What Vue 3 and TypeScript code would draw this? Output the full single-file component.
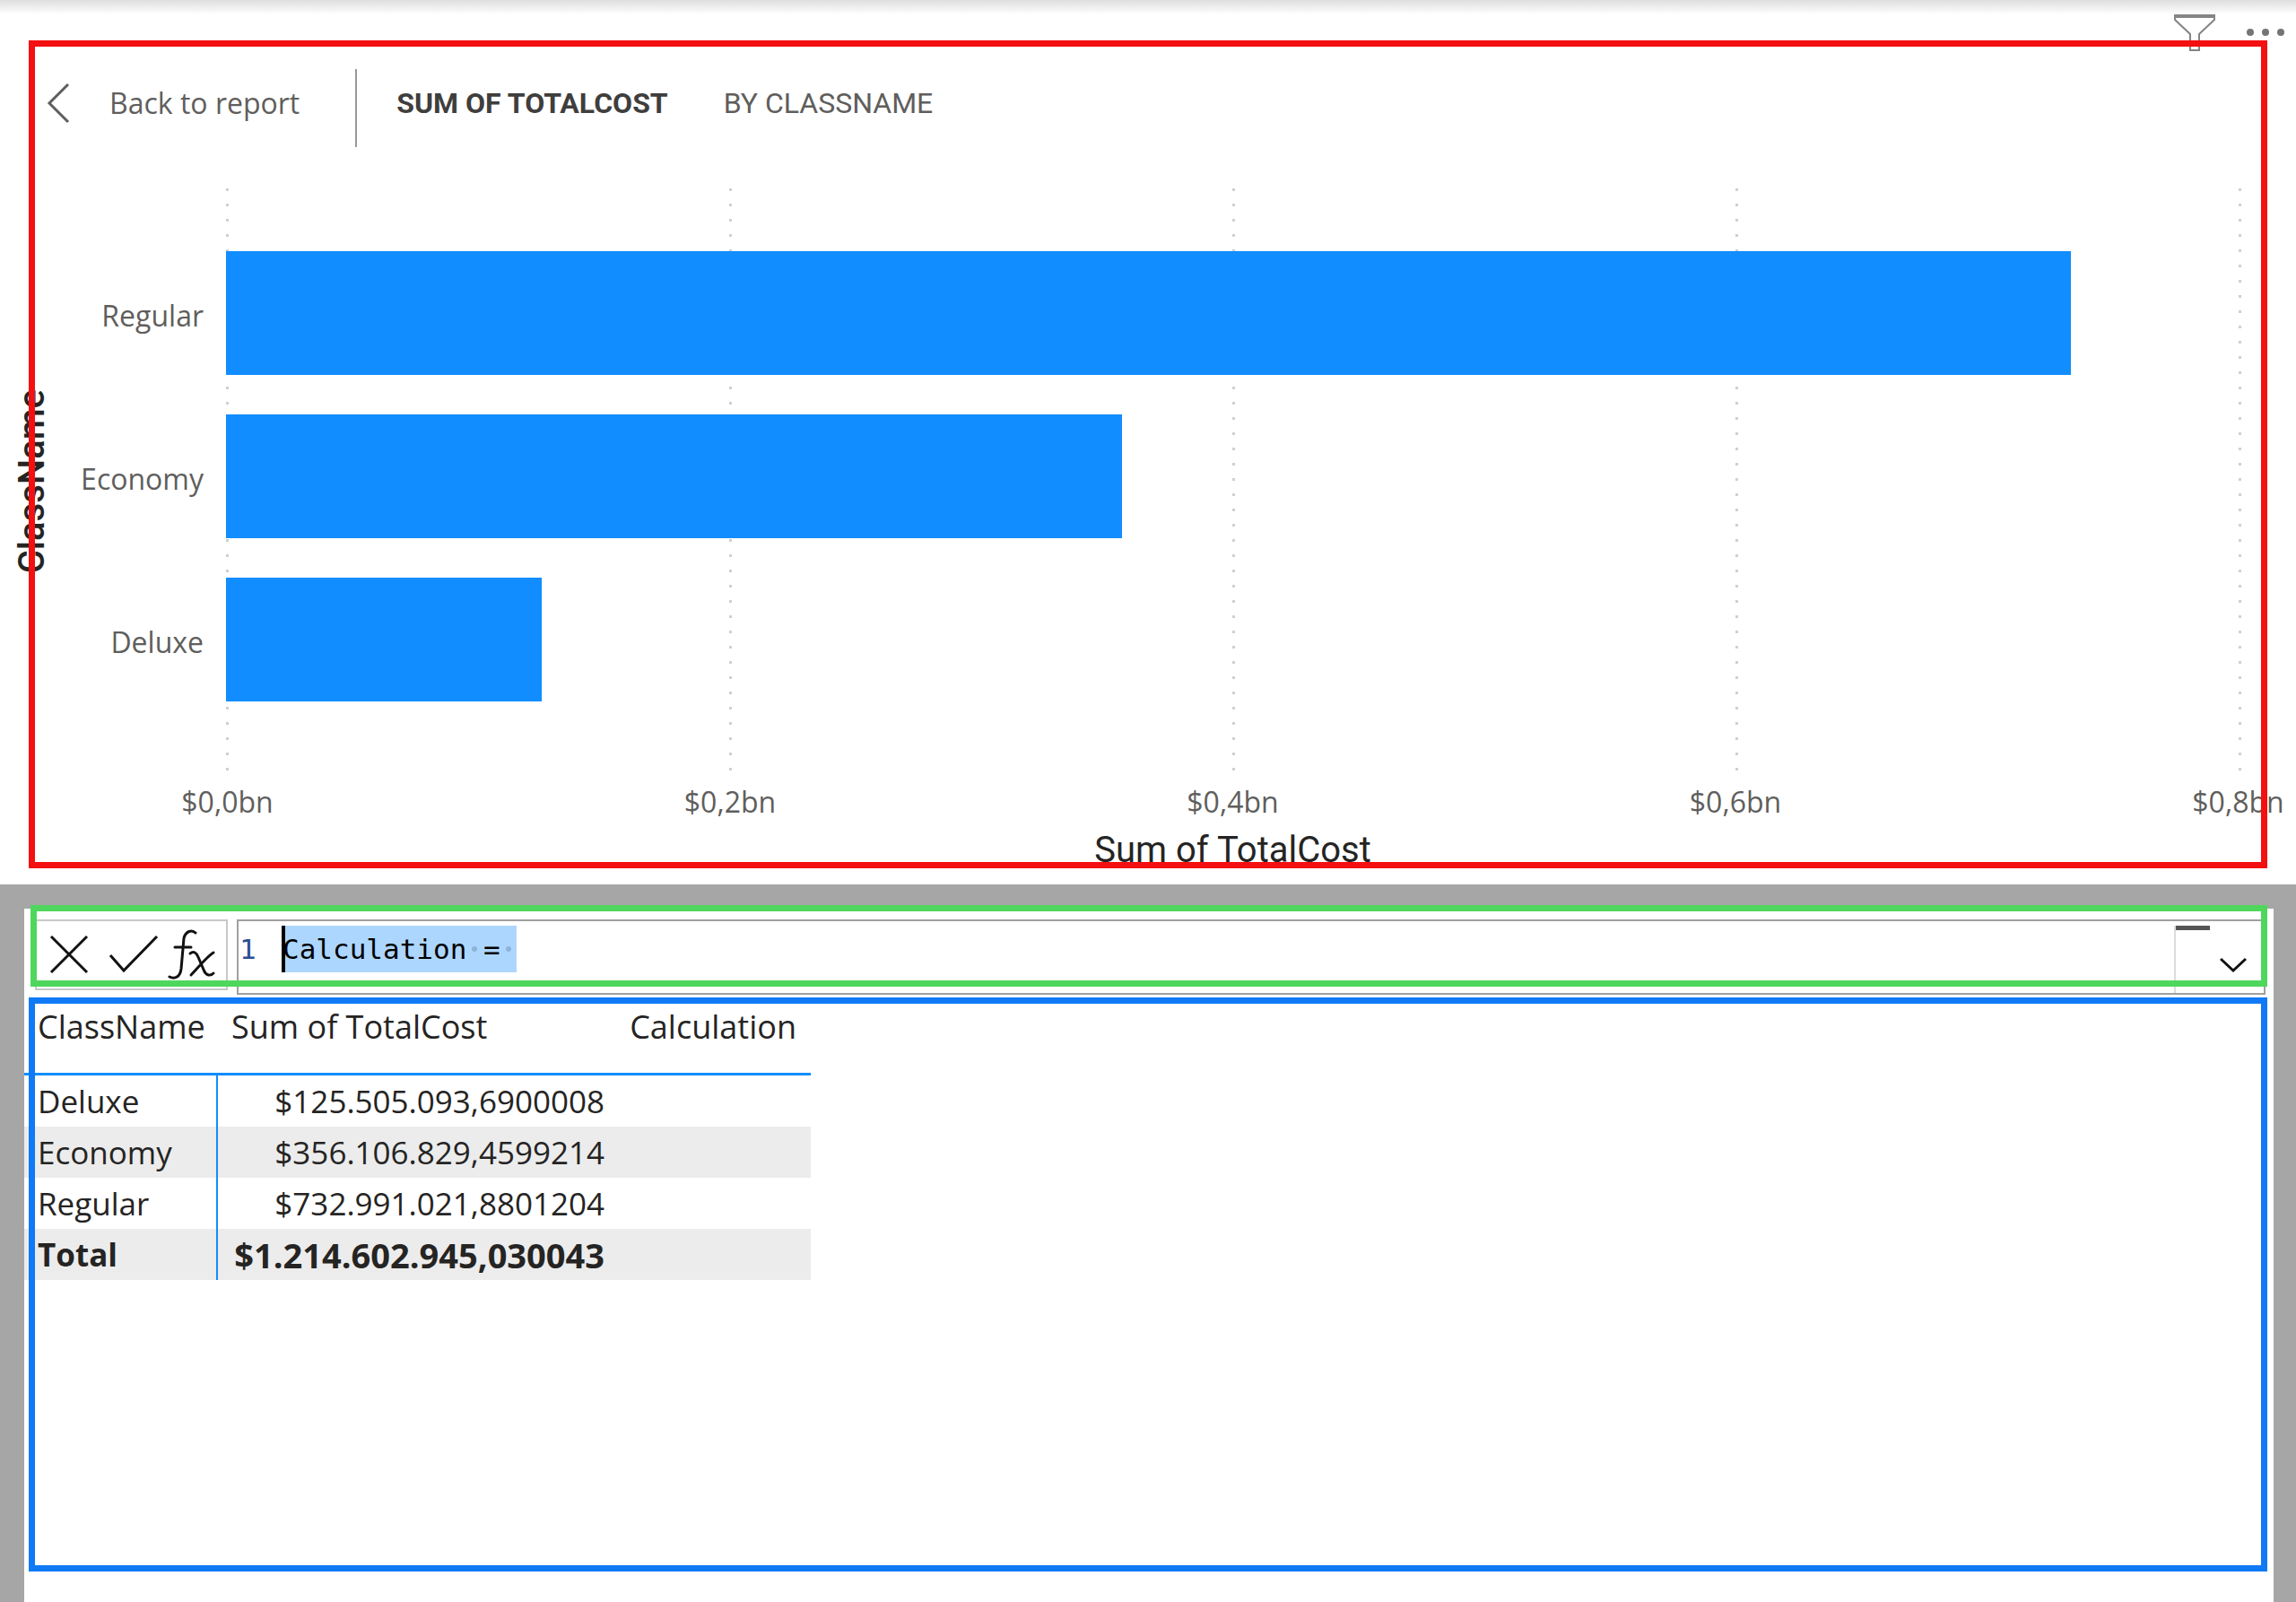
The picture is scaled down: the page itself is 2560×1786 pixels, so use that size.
<script setup lang="ts">
import { ref } from 'vue'

interface Bar {
  name: string
  value: number
}

interface MatrixRow {
  name: string
  cost: string
  calculation: string
}

const axisMax = 800
const bars: Bar[] = [
  { name: 'Regular', value: 732.99 },
  { name: 'Economy', value: 356.11 },
  { name: 'Deluxe', value: 125.51 },
]
const ticks: string[] = ['$0,0bn', '$0,2bn', '$0,4bn', '$0,6bn', '$0,8bn']

const rows: MatrixRow[] = [
  { name: 'Deluxe', cost: '$125.505.093,6900008', calculation: '' },
  { name: 'Economy', cost: '$356.106.829,4599214', calculation: '' },
  { name: 'Regular', cost: '$732.991.021,8801204', calculation: '' },
]

const formula = ref('Calculation = ')

const barWidth = (bar: Bar): string => `${(bar.value / axisMax) * 100}%`
</script>

<template>
  <main class="page">
    <section class="visual" aria-label="Sum of TotalCost by ClassName">
      <div class="visual-tools">
        <button type="button" class="icon-button" aria-label="Filters">
          <svg width="48" height="44" viewBox="0 0 48 44" fill="none" stroke="#858585" stroke-width="2">
            <path d="M2 3H46V8L29 24V42H19V24L2 8Z" />
            <path d="M2 5H46" />
          </svg>
        </button>
        <button type="button" class="icon-button" aria-label="More options">
          <svg width="44" height="44" viewBox="0 0 44 44" fill="#757575">
            <circle cx="5" cy="22" r="4" />
            <circle cx="22" cy="22" r="4" />
            <circle cx="39" cy="22" r="4" />
          </svg>
        </button>
      </div>

      <header class="visual-header">
        <button type="button" class="back">
          <svg width="26" height="46" viewBox="0 0 26 46" fill="none" stroke="#605e5c" stroke-width="3">
            <path d="M24 2L3 23L24 44" />
          </svg>
          <span>Back to report</span>
        </button>
        <span class="divider"></span>
        <h1 class="measure">SUM OF TOTALCOST</h1>
        <h2 class="group">BY CLASSNAME</h2>
      </header>

      <div class="chart">
        <div class="y-title"><span>ClassName</span></div>
        <div class="categories">
          <span v-for="bar in bars" :key="bar.name" class="category">{{ bar.name }}</span>
        </div>
        <div class="plot">
          <div class="gridlines">
            <span v-for="tick in ticks" :key="tick" class="gridline"></span>
          </div>
          <div class="bars">
            <div v-for="bar in bars" :key="bar.name" class="bar" :style="{ width: barWidth(bar) }"></div>
          </div>
        </div>
        <div class="x-axis">
          <div class="ticks">
            <span v-for="tick in ticks" :key="tick" class="tick">{{ tick }}</span>
          </div>
          <div class="x-title">Sum of TotalCost</div>
        </div>
      </div>
      <div class="frame frame-red"></div>
    </section>

    <section class="workspace">
      <div class="panel">
        <div class="formula-bar">
          <div class="actions">
            <button type="button" class="icon-button" aria-label="Cancel">
              <svg width="44" height="56" viewBox="0 0 44 56" fill="none" stroke="#111" stroke-width="3">
                <path d="M2 8L42 48M42 8L2 48" />
              </svg>
            </button>
            <button type="button" class="icon-button" aria-label="Commit">
              <svg width="56" height="56" viewBox="0 0 56 56" fill="none" stroke="#111" stroke-width="3">
                <path d="M2 29L17 46L54 8" />
              </svg>
            </button>
            <button type="button" class="icon-button functions" aria-label="Functions">
              <svg width="54" height="56" viewBox="0 0 54 56" fill="none" stroke="#111" stroke-width="3" stroke-linecap="round">
                <path d="M31 4C27 0 20 2 18 10L15 44C14 53 8 56 2 53" />
                <path d="M8 20H26" />
                <path d="M25 27C29 24 32 26 34 31L40 45C42 51 47 53 51 49M51 26C44 30 33 44 26 51" />
              </svg>
            </button>
          </div>
          <div class="editor">
            <label class="line-number" for="formula">1</label>
            <div class="line">
              <span class="selection"></span>
              <span class="space-mark first"></span>
              <span class="space-mark second"></span>
              <input id="formula" v-model="formula" class="formula-input" type="text" spellcheck="false" />
              <span class="caret"></span>
            </div>
            <div class="editor-side">
              <span class="scroll-mark"></span>
              <button type="button" class="icon-button expand" aria-label="Expand formula bar">
                <svg width="30" height="18" viewBox="0 0 30 18" fill="none" stroke="#111" stroke-width="3">
                  <path d="M1 2L15 15L29 2" />
                </svg>
              </button>
            </div>
          </div>
          <div class="frame frame-green"></div>
        </div>

        <div class="matrix">
          <table>
            <colgroup>
              <col class="col-name" />
              <col class="col-cost" />
              <col class="col-calc" />
            </colgroup>
            <thead>
              <tr>
                <th scope="col">ClassName</th>
                <th scope="col">Sum of TotalCost</th>
                <th scope="col">Calculation</th>
              </tr>
            </thead>
            <tbody>
              <tr v-for="row in rows" :key="row.name">
                <th scope="row">{{ row.name }}</th>
                <td>{{ row.cost }}</td>
                <td>{{ row.calculation }}</td>
              </tr>
              <tr class="total">
                <th scope="row">Total</th>
                <td>$1.214.602.945,030043</td>
                <td></td>
              </tr>
            </tbody>
          </table>
          <div class="frame frame-blue"></div>
        </div>
      </div>
    </section>
  </main>
</template>

<style>
body {
  margin: 0;
  background: #fff;
}
</style>

<style scoped>
.page {
  display: flex;
  flex-direction: column;
  min-height: 100vh;
  overflow: hidden;
  font-family: 'Open Sans', 'Noto Sans', sans-serif;
  font-size: 32px;
  line-height: 44px;
  color: #605e5c;
}

.page *,
.page {
  box-sizing: border-box;
}

button {
  margin: 0;
  padding: 0;
  border: 0;
  background: none;
  font: inherit;
  color: inherit;
}

.icon-button {
  display: flex;
}

.frame {
  position: absolute;
  border: 7px solid;
  pointer-events: none;
}

.frame-red {
  inset: 45px 32px 18px;
  border-color: #f41010;
}

.frame-green {
  inset: -4px 7px 9px;
  border-color: #4fd75d;
}

.frame-blue {
  inset: 3px 7px 34px 5px;
  border-color: #1079f6;
}

/* Chart */
.visual {
  position: relative;
  padding-bottom: 15px;
  background: linear-gradient(#dedede, #fff 16px);
}

.visual-tools {
  display: flex;
  justify-content: flex-end;
  gap: 33px;
  height: 77px;
  padding: 14px 12px 0 0;
}

.visual-header {
  display: flex;
  align-items: flex-start;
  padding-left: 52px;
  line-height: 76px;
  white-space: nowrap;
}

.back {
  display: flex;
  align-items: center;
  gap: 44px;
  height: 76px;
}

.divider {
  width: 2px;
  height: 87px;
  margin: 0 44px 0 62px;
  background: #999;
}

.measure,
.group {
  margin: 0;
  font-family: Roboto, sans-serif;
  font-size: 32px;
}

.measure {
  margin-right: 62px;
  font-weight: 700;
  color: #3f3e3d;
}

.group {
  font-weight: 400;
}

.chart {
  display: grid;
  grid-template-columns: 48px 167px 1fr;
  margin-top: 46px;
  padding: 0 63px 0 12px;
}

.y-title {
  display: flex;
  align-items: center;
  justify-content: center;
  font-family: Roboto, sans-serif;
  font-size: 40px;
  font-weight: 500;
  line-height: 48px;
  color: #252423;
}

.y-title span {
  writing-mode: vertical-rl;
  transform: rotate(180deg);
}

.categories {
  display: flex;
  flex-direction: column;
  gap: 44px;
  padding-top: 73px;
  text-align: right;
}

.category {
  height: 138px;
  line-height: 138px;
}

.plot {
  position: relative;
  margin-left: 25px;
  padding: 70px 0 82px;
}

.gridlines {
  position: absolute;
  inset: 0 -2px 0 0;
  display: flex;
  justify-content: space-between;
}

.gridline {
  width: 3px;
  background: repeating-linear-gradient(#d0d0d0 0 3px, transparent 3px 17px);
}

.bars {
  position: relative;
  display: flex;
  flex-direction: column;
  gap: 44px;
}

.bar {
  height: 138px;
  background: #118dff;
}

.x-axis {
  grid-column: 3;
  margin-left: 25px;
  padding-top: 8px;
}

.ticks {
  display: flex;
  justify-content: space-between;
}

.tick {
  display: flex;
  justify-content: center;
  width: 3px;
  white-space: nowrap;
}

.x-title {
  margin-top: 9px;
  font-family: Roboto, sans-serif;
  font-size: 40px;
  font-weight: 400;
  line-height: 46px;
  text-align: center;
  color: #252423;
}

/* Formula bar */
.workspace {
  display: flex;
  flex: 1;
  padding: 27px 25px 0 27px;
  background: #a6a6a6;
}

.panel {
  display: flex;
  flex: 1;
  flex-direction: column;
  background: #fff;
}

.formula-bar {
  position: relative;
  display: flex;
  align-items: flex-start;
  gap: 10px;
  padding: 12px 9px 0 12px;
}

.actions {
  display: flex;
  align-items: flex-start;
  gap: 22px;
  height: 79px;
  padding: 9px 11px 0 14px;
  border: 2px solid #c8c8c8;
}

.functions {
  margin-left: -12px;
}

.editor {
  display: flex;
  flex: 1;
  height: 84px;
  border: 2px solid #a0a0a0;
  font-family: 'DejaVu Sans Mono', monospace;
  font-size: 31px;
  line-height: 52px;
}

.line-number {
  width: 49px;
  padding: 5px 0 0 1px;
  color: #2b4f94;
}

.line {
  position: relative;
  flex: 1;
  height: 52px;
  margin-top: 5px;
}

.selection {
  position: absolute;
  inset: 0 auto 0 0;
  width: 14ch;
  background: #add6ff;
}

.space-mark {
  position: absolute;
  top: 23px;
  width: 6px;
  height: 6px;
  border-radius: 3px;
  background: #8eb2d8;
}

.space-mark.first {
  left: 11ch;
  margin-left: 6px;
}

.space-mark.second {
  left: 13ch;
  margin-left: 6px;
}

.formula-input {
  position: relative;
  display: block;
  width: 100%;
  height: 52px;
  padding: 0;
  border: 0;
  outline: 0;
  background: none;
  font: inherit;
  color: #000;
}

.caret {
  position: absolute;
  inset: 0 auto 0 -1px;
  width: 4px;
  background: #000;
}

.editor-side {
  display: flex;
  align-items: flex-start;
  width: 100px;
  margin-top: 5px;
  border-left: 2px solid #dcdcdc;
}

.scroll-mark {
  width: 38px;
  height: 5px;
  background: #555;
}

.expand {
  margin: 35px 0 0 11px;
}

/* Matrix */
.matrix {
  position: relative;
  flex: 1;
  min-height: 360px;
}

table {
  width: 877px;
  table-layout: fixed;
  border-spacing: 0;
  font-size: 35px;
  line-height: 48px;
  white-space: nowrap;
  color: #252423;
}

.col-name {
  width: 216px;
}

.col-cost {
  width: 447px;
}

.col-calc {
  width: 214px;
}

th {
  padding: 0 0 0 15px;
  font-weight: 400;
  text-align: left;
}

thead th {
  height: 90px;
  padding-top: 12px;
  border-bottom: 3px solid #118dff;
  font-size: 36px;
  vertical-align: top;
}

thead th:last-child {
  padding: 12px 16px 0 0;
  text-align: right;
}

tbody th {
  height: 57px;
  border-right: 2px solid #118dff;
}

td {
  padding: 0 16px 0 0;
  text-align: right;
}

tbody tr:nth-child(even) {
  background: #ececec;
}

.total th,
.total td {
  font-weight: 700;
}

.total td {
  font-size: 38px;
}
</style>
